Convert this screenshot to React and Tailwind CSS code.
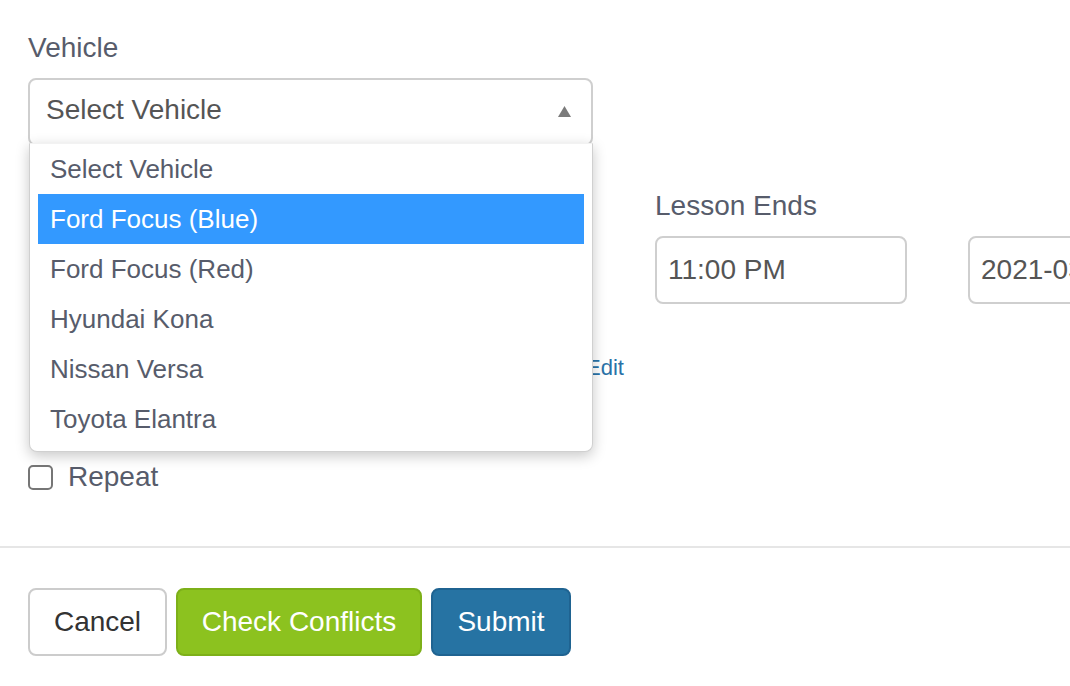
import React from "react";

const vehicles = [
  "Select Vehicle",
  "Ford Focus (Blue)",
  "Ford Focus (Red)",
  "Hyundai Kona",
  "Nissan Versa",
  "Toyota Elantra",
];

export default function App() {
  const selected = 1;

  return (
    <div
      className="min-h-screen bg-white overflow-hidden"
      style={{ fontFamily: '"Liberation Sans", Arial, sans-serif' }}
    >
      <div className="pl-[28px] pt-[28px]">
        {/* Vehicle select */}
        <label className="block text-[28px] leading-[40px] text-[#575c6b] mb-[10px]">Vehicle</label>
        <div className="relative w-[565px] z-10">
          <div className="h-[68px] border-2 border-[#cfcfcf] rounded-[8px] flex items-center justify-between pl-[16px] pr-[20px] pb-[5px] bg-white">
            <span className="text-[28px] text-[#555]">Select Vehicle</span>
            <svg width="13" height="11" viewBox="0 0 13 11" className="mt-[3px]">
              <polygon points="6.5,0 13,11 0,11" fill="#7b7b7b" />
            </svg>
          </div>
          <ul className="absolute left-[1px] right-0 top-[65px] bg-white border border-[#d0d0d0] border-t-[#f2f2f2] rounded-b-[8px] pb-[7px] shadow-[0_4px_14px_rgba(0,0,0,0.22)]">
            {vehicles.map((v, i) => (
              <li
                key={v}
                className={
                  "h-[50px] mx-[8px] pl-[12px] flex items-center text-[26px] " +
                  (i === selected ? "bg-[#3399ff] text-white" : "text-[#575c6b]")
                }
              >
                {v}
              </li>
            ))}
          </ul>
        </div>

        {/* Lesson times */}
        <div className="flex mt-[40px]">
          <div className="w-[627px] shrink-0" />
          <div className="w-[313px] shrink-0">
            <label className="block text-[28px] leading-[40px] text-[#575c6b] mb-[10px]">Lesson Ends</label>
            <div className="w-[252px] h-[68px] border-2 border-[#cfcfcf] rounded-[8px] flex items-center pl-[11px] text-[28px] text-[#555]">
              11:00 PM
            </div>
          </div>
          <div className="shrink-0">
            <div className="h-[50px]" />
            <div className="w-[252px] h-[68px] border-2 border-[#cfcfcf] rounded-[8px] flex items-center pl-[11px] text-[28px] text-[#555]">
              2021-03-15
            </div>
          </div>
        </div>

        {/* Instructor line */}
        <div className="flex mt-[47px] text-[22px] leading-[34px]">
          <span className="w-[558px] shrink-0" />
          <a className="text-[#2a72a8]">Edit</a>
        </div>

        {/* Repeat */}
        <label className="flex items-center gap-[15px] mt-[72px] h-[40px]">
          <span className="w-[25px] h-[25px] border-2 border-[#767676] rounded-[5px] bg-white" />
          <span className="text-[28px] text-[#575c6b]">Repeat</span>
        </label>
      </div>

      <div className="border-t-2 border-[#e6e6e6] mt-[49px]" />

      <div className="flex gap-[9px] pl-[28px] pt-[40px]">
        <button className="w-[139px] h-[68px] border-2 border-[#cccccc] rounded-[8px] bg-white text-[28px] text-[#333]">
          Cancel
        </button>
        <button className="w-[246px] h-[68px] border-2 border-[#7db019] rounded-[8px] bg-[#8cc21f] text-[28px] text-white">
          Check Conflicts
        </button>
        <button className="w-[140px] h-[68px] border-2 border-[#1f6391] rounded-[8px] bg-[#2673a3] text-[28px] text-white">
          Submit
        </button>
      </div>
    </div>
  );
}
